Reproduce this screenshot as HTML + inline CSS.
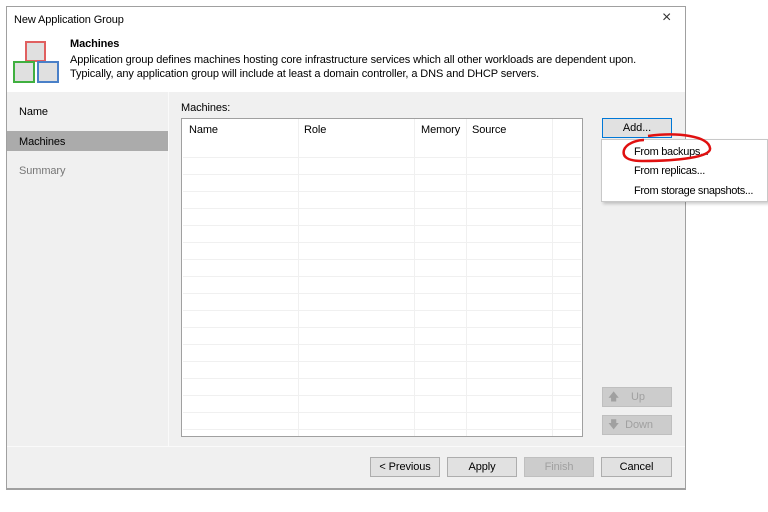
<!DOCTYPE html>
<html><head><meta charset="utf-8"><style>
*{margin:0;padding:0;box-sizing:border-box}
body{width:768px;height:512px;background:#fff;font-family:"Liberation Sans",Arial,sans-serif;font-size:11px;color:#000;position:relative;overflow:hidden;letter-spacing:-0.1px}
.a{position:absolute}
.btn{position:absolute;height:20px;background:#e1e1e1;border:1px solid #adadad;text-align:center;line-height:18px;font-size:11px}
.dis{color:#a0a0a0;background:#cccccc;border-color:#bfbfbf}
.row{position:absolute;left:1px;right:1px;height:1px;background:#f0f0f0}
</style></head><body>
<div class="a" style="left:6px;top:6px;width:680px;height:484px;border:1px solid #a0a0a0;border-bottom:2px solid #a0a0a0;background:#f0f0f0"></div>
<div class="a" style="left:7px;top:7px;width:678px;height:85px;background:#fff"></div>
<div class="a" style="left:14px;top:14px;font-size:11px">New Application Group</div>
<div class="a" style="left:662px;top:9px;font-size:16px;color:#333">×</div>
<div class="a" style="left:25px;top:41px;width:21px;height:21px;border:2px solid #e06060;background:#e0e0e0"></div>
<div class="a" style="left:13px;top:61px;width:22px;height:22px;border:2px solid #40b040;background:#e0e0e0"></div>
<div class="a" style="left:37px;top:61px;width:22px;height:22px;border:2px solid #4a80c8;background:#e0e0e0"></div>
<div class="a" style="left:70px;top:38px;font-weight:bold">Machines</div>
<div class="a" style="left:70px;top:53px;line-height:14px">Application group defines machines hosting core infrastructure services which all other workloads are dependent upon.<br>Typically, any application group will include at least a domain controller, a DNS and DHCP servers.</div>
<div class="a" style="left:168px;top:92px;width:1px;height:354px;background:#fafafa"></div>
<div class="a" style="left:7px;top:446px;width:678px;height:1px;background:#fafafa"></div>
<div class="a" style="left:19px;top:106px">Name</div>
<div class="a" style="left:7px;top:131px;width:161px;height:20px;background:#ababab"></div>
<div class="a" style="left:19px;top:136px">Machines</div>
<div class="a" style="left:19px;top:165px;color:#777">Summary</div>
<div class="a" style="left:181px;top:102px">Machines:</div>
<div class="a" style="left:181px;top:118px;width:402px;height:319px;background:#fff;border:1px solid #a0a0a0;overflow:hidden">
<div class="a" style="left:116px;top:0;width:1px;height:319px;background:#f0f0f0"></div>
<div class="a" style="left:232px;top:0;width:1px;height:319px;background:#f0f0f0"></div>
<div class="a" style="left:284px;top:0;width:1px;height:319px;background:#f0f0f0"></div>
<div class="a" style="left:370px;top:0;width:1px;height:319px;background:#f0f0f0"></div>
<div class="a" style="left:7px;top:5px">Name</div>
<div class="a" style="left:122px;top:5px">Role</div>
<div class="a" style="left:239px;top:5px">Memory</div>
<div class="a" style="left:290px;top:5px">Source</div>
<div class="row" style="top:38px"></div><div class="row" style="top:55px"></div><div class="row" style="top:72px"></div><div class="row" style="top:89px"></div><div class="row" style="top:106px"></div><div class="row" style="top:123px"></div><div class="row" style="top:140px"></div><div class="row" style="top:157px"></div><div class="row" style="top:174px"></div><div class="row" style="top:191px"></div><div class="row" style="top:208px"></div><div class="row" style="top:225px"></div><div class="row" style="top:242px"></div><div class="row" style="top:259px"></div><div class="row" style="top:276px"></div><div class="row" style="top:293px"></div><div class="row" style="top:310px"></div>
</div>
<div class="btn" style="left:602px;top:118px;width:70px;border-color:#0078d7">Add...</div>
<div class="a" style="left:601px;top:139px;width:167px;height:63px;background:#fff;border:1px solid #c8c8c8;box-shadow:2px 2px 3px rgba(0,0,0,.2)"></div>
<div class="a" style="left:634px;top:146px;letter-spacing:-0.3px">From backups...</div>
<div class="a" style="left:634px;top:165px;letter-spacing:-0.3px">From replicas...</div>
<div class="a" style="left:634px;top:185px;letter-spacing:-0.35px">From storage snapshots...</div>
<svg class="a" style="left:618px;top:132px" width="98" height="32"><path d="M30 4 C60 0 90 4 92 16 C94 25 60 29 24 29 C10 29 4 25 6 18 C8 12 18 8 26 8" fill="none" stroke="#e01010" stroke-width="2.5"/></svg>
<div class="btn dis" style="left:602px;top:387px;width:70px;text-align:left;padding-left:5px">🡅&nbsp;&nbsp;&nbsp;&nbsp;Up</div>
<div class="btn dis" style="left:602px;top:415px;width:70px;text-align:left;padding-left:5px">🡇&nbsp;&nbsp;Down</div>
<div class="btn" style="left:370px;top:457px;width:70px">&lt; Previous</div>
<div class="btn" style="left:447px;top:457px;width:70px">Apply</div>
<div class="btn dis" style="left:524px;top:457px;width:70px">Finish</div>
<div class="btn" style="left:601px;top:457px;width:71px">Cancel</div>
</body></html>
